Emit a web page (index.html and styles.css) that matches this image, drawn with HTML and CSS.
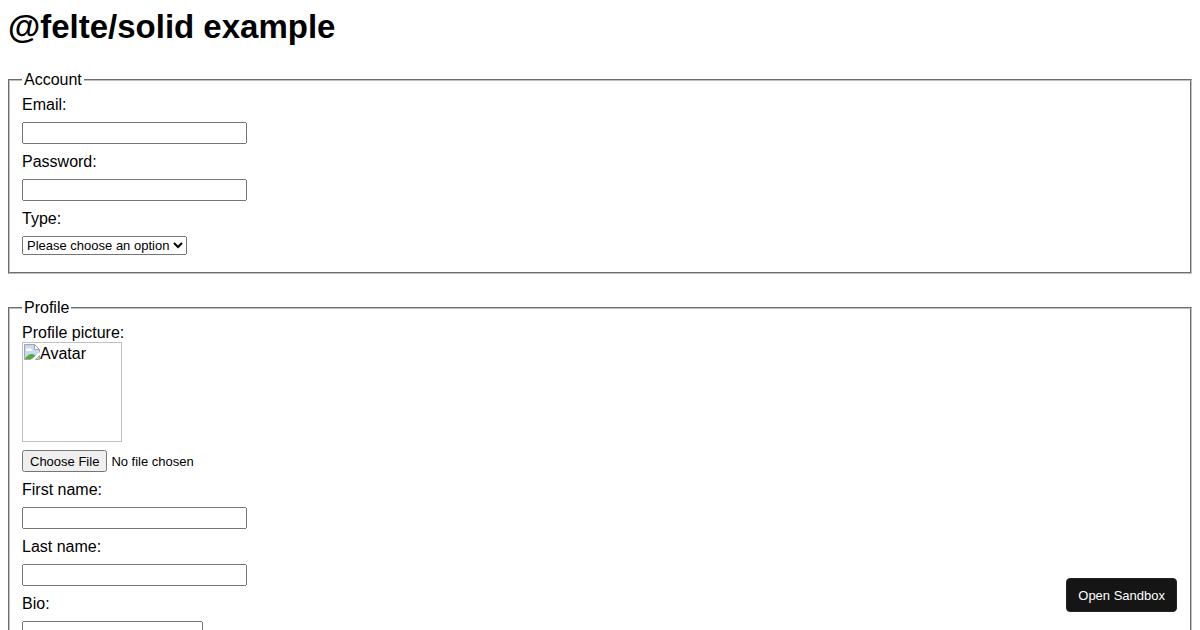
FILE: index.html
```
<!DOCTYPE html>
<html lang="en">

<head>
    <meta charset="utf-8">
    <meta name="viewport" content="width=device-width, initial-scale=1">
    <title>@felte/solid example</title>
    <link rel="stylesheet" href="styles.css">
</head>

<body>
    <h1>@felte/solid example</h1>
    <form>
        <fieldset>
            <legend>Account</legend>
            <label for="email">Email:</label>
            <input class="text" type="email" id="email" name="email">
            <label for="password">Password:</label>
            <input class="text" type="password" id="password" name="password">
            <label for="type">Type:</label>
            <select id="type" name="type">
                <option value="">Please choose an option</option>
                <option value="user">User</option>
                <option value="admin">Admin</option>
            </select>
        </fieldset>
        <fieldset>
            <legend>Profile</legend>
            <label class="picture-label" for="picture">Profile picture:</label>
            <div class="avatar">
                <svg width="16" height="16" viewBox="0 0 16 16" aria-hidden="true">
                    <path d="M.5 .5h10l5 5v4l-6 6H.5z" fill="#c6d9f5" />
                    <path d="M2 6c0-2 2-2 2.500-1 1-2 3-1 3 .500 1 0 1 1.500 0 1.500H3C2 7 2 6.500 2 6z" fill="#fff" />
                    <path d="M1 15c1-3 4-5 7-5 2 0 3 1 4 2l-3 3z" fill="#56ad38" />
                    <path d="M16 7.500v3L10.500 16H7z" fill="#fff" />
                    <path d="M7 15.500H.5V.5h10l5 5v3" fill="none" stroke="#a0a5aa" />
                    <path d="M10.500 .5v5h5z" fill="#fff" stroke="#a0a5aa" />
                    <path d="M15.500 11.500v4h-4z" fill="#c6d9f5" stroke="#a0a5aa" />
                </svg>
                <span>Avatar</span>
            </div>
            <input type="file" id="picture" name="picture">
            <label for="first-name">First name:</label>
            <input class="text" type="text" id="first-name" name="firstName">
            <label for="last-name">Last name:</label>
            <input class="text" type="text" id="last-name" name="lastName">
            <label for="bio">Bio:</label>
            <textarea id="bio" name="bio"></textarea>
        </fieldset>
    </form>
    <button class="open-sandbox" type="button">Open Sandbox</button>
</body>

</html>
```
FILE: styles.css
```
body {
    margin: 8px;
    font-family: "Liberation Sans", Arial, sans-serif;
    font-size: 16px;
    line-height: 19px;
    color: #000;
    background: #fff;
}

h1 {
    margin: 0 0 24px;
    font-size: 33px;
    line-height: 38px;
}

fieldset {
    margin: 0 0 24px;
    padding: 6px 12px 17px;
    border: 2px groove #c0c0c0;
}

label,
.text,
select,
textarea,
input[type="file"] {
    display: block;
}

label,
.text,
.avatar,
input[type="file"] {
    margin-bottom: 8px;
}

.picture-label {
    margin-bottom: 0;
}

.text,
select,
input[type="file"],
.open-sandbox {
    font-family: inherit;
    font-size: 13px;
}

.text {
    box-sizing: border-box;
    width: 225px;
    height: 22px;
}

select {
    height: 19px;
}

.avatar {
    display: flex;
    align-items: flex-start;
    box-sizing: border-box;
    width: 100px;
    height: 100px;
    padding: 1px;
    border: 1px solid #c0c0c0;
}

input[type="file"] {
    height: 22px;
}

input[type="file"]::file-selector-button {
    height: 22px;
}

textarea {
    box-sizing: border-box;
    width: 181px;
    height: 36px;
}

.open-sandbox {
    position: fixed;
    right: 23px;
    bottom: 18px;
    height: 34px;
    padding: 0 11px;
    border: 1px solid #252525;
    border-radius: 4px;
    background: #151515;
    color: #fff;
}
```
